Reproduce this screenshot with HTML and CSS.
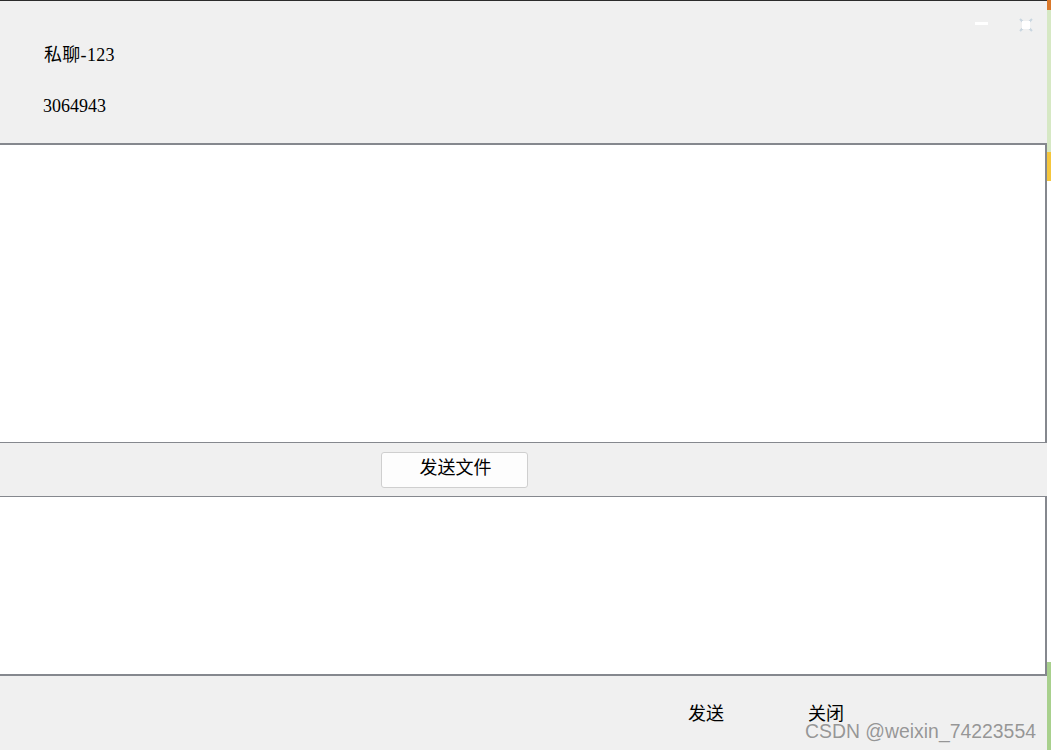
FILE: index.html
```html
<!DOCTYPE html>
<html>
<head>
<meta charset="utf-8">
<link rel="stylesheet" href="styles.css">
</head>
<body>
<div class="screen">
  <div class="window">
    <div class="topline"></div>
    <div class="header">
      <div class="labels">
        <div class="title">私聊-123</div>
        <div class="uid">3064943</div>
      </div>
      <div class="controls">
        <span class="min"></span>
        <svg class="close" width="14" height="14" viewBox="0 0 14 14">
          <path d="M1 1 L4 4 M13 1 L10 4 M1 13 L4 10 M13 13 L10 10" stroke="#c9d6e0" stroke-width="2"/>
          <rect x="3" y="3" width="8" height="8" fill="#ffffff"/>
        </svg>
      </div>
    </div>
    <div class="chat box"></div>
    <div class="toolbar">
      <button class="filebtn">发送文件</button>
    </div>
    <div class="input box"></div>
    <div class="footer">
      <span class="flat send">发送</span>
      <span class="flat closebtn">关闭</span>
    </div>
    <div class="watermark">CSDN @weixin_74223554</div>
  </div>
  <div class="strip"></div>
</div>
</body>
</html>
```
FILE: styles.css
```css
html, body {
  margin: 0;
  padding: 0;
  overflow: hidden;
}
body {
  width: 1051px;
  height: 750px;
  font-family: "Liberation Serif", "Noto Sans CJK SC", serif;
  color: #000;
}
.screen {
  display: flex;
  width: 1051px;
  height: 750px;
}
.window {
  position: relative;
  width: 1047px;
  height: 750px;
  background: #f0f0f0;
  display: flex;
  flex-direction: column;
  overflow: hidden;
}
.topline {
  height: 1px;
  background: #2b2b2b;
  flex: none;
}
.header {
  height: 142px;
  flex: none;
  display: flex;
  justify-content: space-between;
}
.labels {
  padding: 45px 0 0 44px;
  display: flex;
  flex-direction: column;
  gap: 33px;
}
.title, .uid {
  font-size: 18px;
  line-height: 18px;
}
.title {
  letter-spacing: 0.3px;
}
.uid {
  margin-left: -1px;
}
.controls {
  display: flex;
  align-items: flex-start;
  padding: 17px 14px 0 0;
  gap: 31px;
}
.min {
  display: block;
  width: 13px;
  height: 3px;
  background: #ffffff;
  margin-top: 4px;
}
.close {
  display: block;
}
.box {
  flex: none;
  margin-left: -2px;
  background: #ffffff;
  border: 2px solid #85888e;
  border-bottom-width: 1px;
  box-sizing: border-box;
}
.chat {
  height: 300px;
}
.input {
  height: 180px;
  border-top-width: 1px;
  border-bottom-width: 2px;
}
.toolbar {
  height: 53px;
  flex: none;
  display: flex;
  align-items: flex-start;
  padding: 9px 0 0 381px;
  box-sizing: border-box;
}
.filebtn {
  width: 147px;
  height: 36px;
  background: #fdfdfd;
  border: 1px solid #cfcfcf;
  border-radius: 3px;
  font-family: "Liberation Serif", "Noto Sans CJK SC", serif;
  font-size: 18px;
  line-height: 18px;
  color: #000;
  padding: 0 0 4px 2px;
}
.footer {
  flex: 1;
  display: flex;
  padding: 29px 0 0 688px;
  gap: 84px;
}
.flat {
  font-size: 18px;
  line-height: 18px;
}
.watermark {
  position: absolute;
  left: 805px;
  top: 720px;
  font-family: "Liberation Sans", Arial, sans-serif;
  font-size: 19.4px;
  line-height: 22px;
  color: rgba(120, 120, 120, 0.75);
  white-space: nowrap;
}
.strip {
  width: 4px;
  height: 750px;
  background: linear-gradient(to bottom,
    #d9782a 0, #d9782a 10px,
    #d6e8c4 10px, #d6e8c4 152px,
    #f5c63c 152px, #f5c63c 181px,
    #ffffff 181px, #ffffff 662px,
    #a8d08d 662px, #a8d08d 750px);
}
```
